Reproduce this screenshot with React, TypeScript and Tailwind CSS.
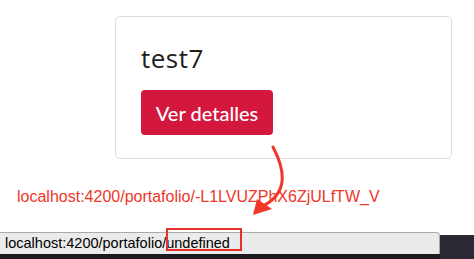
import React from "react";

export default function App() {
  return (
    <div className="relative w-[474px] h-[259px] bg-white overflow-hidden flex flex-col">
      {/* card */}
      <div className="ml-[115px] mt-[16px] w-[337px] h-[143px] shrink-0 rounded-[5px] border border-[#dedede] bg-white pl-[25px] pt-[26px] flex flex-col">
        <div
          className="text-[26px] leading-[30px] text-[#1e1e1e] tracking-[0.5px]"
          style={{ fontFamily: '"Open Sans", sans-serif' }}
        >
          test7
        </div>
        <button
          className="mt-[17px] w-[132px] h-[45px] rounded-[4px] bg-[#d3173d] text-white text-[20px] leading-none font-medium flex items-center justify-center"
          style={{ fontFamily: 'Lato, sans-serif' }}
        >
          Ver detalles
        </button>
      </div>

      {/* red url */}
      <div
        className="ml-[17px] mt-[30px] text-[16px] leading-[16px] text-[#f0362a] whitespace-nowrap"
        style={{ fontFamily: '"Liberation Sans", Arial, sans-serif' }}
      >
        localhost:4200/portafolio/-L1LVUZPhX6ZjULfTW_V
      </div>

      {/* bottom status row */}
      <div className="mt-auto h-[27px] flex shrink-0">
        <div className="w-[440px] flex flex-col">
          <div className="relative h-[22px] bg-[#ebebeb] border-t border-r border-[#a9a9a9] rounded-tr-[4px] flex items-center pl-[5px]">
            <span
              className="text-[14.5px] leading-none text-[#000] whitespace-nowrap"
              style={{ fontFamily: '"Liberation Sans", Arial, sans-serif' }}
            >
              localhost:4200/portafolio/undefined
            </span>
            <div className="absolute left-[166px] top-[-5px] w-[76px] h-[23px] border-2 border-[#e8302a]" />
          </div>
          <div className="flex-1 bg-[#1c1b20]" />
        </div>
        <div className="flex-1 mt-[3px] bg-[#2d2934]" />
      </div>

      {/* arrow */}
      <svg className="absolute left-0 top-0" width="474" height="259" viewBox="0 0 474 259">
        <path
          d="M273 147 C 284 168, 290 192, 263 206"
          fill="none"
          stroke="#f0372a"
          strokeWidth="3"
          strokeLinecap="round"
        />
        <polygon points="253,215 257,199 272,209" fill="#f0372a" />
      </svg>
    </div>
  );
}
